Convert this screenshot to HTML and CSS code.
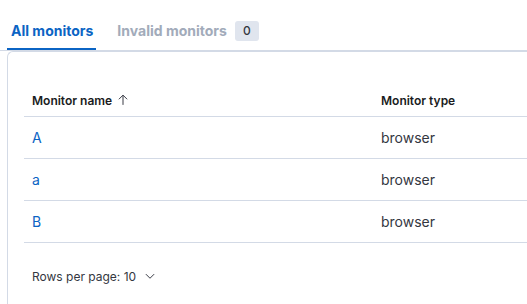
FILE: index.html
```html
<!DOCTYPE html>
<html lang="en">
<head>
    <meta charset="UTF-8">
    <meta name="viewport" content="width=device-width, initial-scale=1.0">
    <title>Monitors</title>
    <link rel="stylesheet" href="styles.css">
</head>
<body>
    <div class="tabs">
        <div class="tab tab-selected">All monitors</div>
        <div class="tab tab-disabled">Invalid monitors <span class="badge">0</span></div>
    </div>

    <div class="panel">
        <table class="monitors">
            <thead>
                <tr>
                    <th class="col-name">Monitor name<svg class="sort-icon" width="12" height="12" viewBox="0 0 16 16"><path d="M8 1.5v13M2.5 7L8 1.5 13.5 7" fill="none" stroke="#343741" stroke-width="1.3"/></svg></th>
                    <th>Monitor type</th>
                </tr>
            </thead>
            <tbody>
                <tr><td><a href="#">A</a></td><td>browser</td></tr>
                <tr><td><a href="#">a</a></td><td>browser</td></tr>
                <tr><td><a href="#">B</a></td><td>browser</td></tr>
            </tbody>
        </table>

        <div class="pagination">
            <button class="rows-button">Rows per page: 10
                <svg width="12" height="12" viewBox="0 0 16 16"><path d="M2.5 5.5L8 11l5.5-5.5" fill="none" stroke="#343741" stroke-width="1.3"/></svg>
            </button>
        </div>
    </div>
</body>
</html>
```

FILE: styles.css
```css
html, body {
    height: 100%;
}

body {
    font-family: 'Inter', sans-serif;
    margin: 0;
    padding: 0;
    background-color: white;
    color: #343741;
    overflow: hidden;
    display: flex;
    flex-direction: column;
}

.tabs {
    display: flex;
    gap: 17px;
    padding-left: 7px;
    border-bottom: 1px solid #d3dae6;
}

.tab {
    font-size: 14px;
    font-weight: 700;
    line-height: 20px;
    padding: 21px 3px 9px 4px;
    display: flex;
    align-items: center;
}

.tab-selected {
    color: #0b64c4;
    box-shadow: inset 0 -2px 0 #0b64c4;
}

.tab-disabled {
    color: #a2abba;
}

.badge {
    margin-left: 8px;
    background-color: #e0e5ee;
    color: #343741;
    font-size: 12px;
    font-weight: 500;
    line-height: 20px;
    padding: 0 8px;
    border-radius: 3px;
}

.panel {
    flex: 1;
    margin-left: 7px;
    border-top: 1px solid #d3dae6;
    border-left: 1px solid #d3dae6;
    border-top-left-radius: 6px;
    padding: 32px 0 0 16px;
}

.monitors {
    border-collapse: collapse;
    width: 100%;
    table-layout: fixed;
}

.monitors th {
    text-align: left;
    font-size: 12px;
    font-weight: 600;
    color: #1a1c21;
    height: 32px;
    padding: 0 8px;
    border-bottom: 1px solid #d3dae6;
}

.col-name {
    width: 333px;
}

.sort-icon {
    vertical-align: -1px;
    margin-left: 5px;
}

.monitors td {
    font-size: 14px;
    height: 41px;
    padding: 0 8px;
    border-bottom: 1px solid #d3dae6;
}

.monitors a {
    color: #0b64c4;
    text-decoration: none;
}

.pagination {
    margin-top: 17px;
    height: 32px;
    display: flex;
    align-items: center;
    padding-left: 8px;
}

.rows-button {
    background: none;
    border: none;
    padding: 0;
    font-family: 'Inter', sans-serif;
    font-size: 12px;
    color: #343741;
    display: flex;
    align-items: center;
    gap: 8px;
}
```
